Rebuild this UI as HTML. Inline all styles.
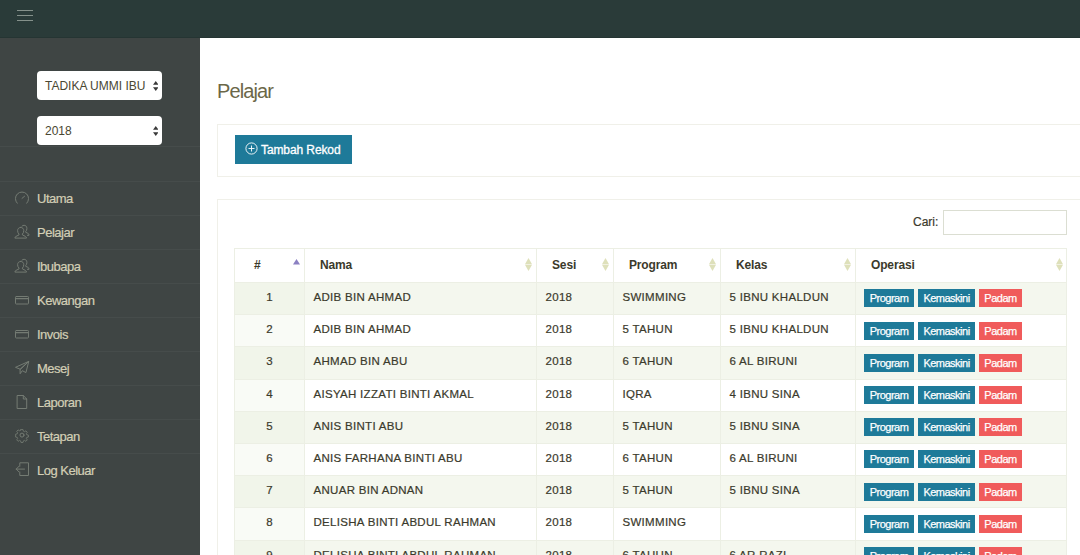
<!DOCTYPE html><html><head><meta charset="utf-8"><title>Pelajar</title><style>
*{box-sizing:border-box;margin:0;padding:0}
html,body{width:1080px;height:555px;overflow:hidden;background:#fff;font-family:"Liberation Sans",sans-serif;font-size:12px;color:#3b3a2c}
.abs{position:absolute}
#hdr{left:0;top:0;width:1080px;height:38px;background:#2a3b39;box-shadow:inset 0 -1px 0 rgba(0,0,0,.1)}
#hdr i{position:absolute;left:17px;width:16px;height:1px;background:#85918b}
#side{left:0;top:38px;width:200px;height:517px;background:#3f4544}
.sel{position:absolute;left:37px;width:125px;height:29px;background:#fff;border-radius:4px;color:#4a4732;font-size:12px;line-height:31px;padding-left:8px}
.sel svg{position:absolute;right:4px;top:10px;width:5.5px;height:10px}
.sep{position:absolute;left:0;width:200px;height:1px;background:#464c4b}
.mi{position:absolute;left:0;width:200px;height:34px;color:#d3cfb6;font-size:13px;line-height:36px;padding-left:37px;letter-spacing:-0.5px;white-space:nowrap;-webkit-text-stroke:.2px #d3cfb6}
.mi svg{position:absolute;left:14px;top:9px;width:16px;height:16px;fill:none;stroke:#747b73;stroke-width:1;stroke-linejoin:round;stroke-linecap:round}
h1{position:absolute;left:217px;top:78px;font-size:20px;font-weight:400;color:#6b6748;letter-spacing:-0.9px;line-height:26px}
.panel{position:absolute;left:217px;width:900px;border:1px solid #f0f0e9;background:#fff}
#add{position:absolute;left:235px;top:135px;width:117px;height:29px;background:#1e7a99;color:#fff;font-size:12px;line-height:30px;letter-spacing:-.1px;white-space:nowrap;-webkit-text-stroke:0.3px #fff}
#add span{position:absolute;left:26px;top:0}
#add svg{position:absolute;left:10px;top:7px;width:13px;height:13px;fill:none;stroke:#fff;stroke-width:.9}
#cari{position:absolute;left:913px;top:210px;line-height:25px;font-size:12px;color:#3b3a2c;-webkit-text-stroke:.2px #3b3a2c}
#inp{position:absolute;left:943px;top:210px;width:124px;height:25px;border:1px solid #dbded2;background:#fff}
#tbl{position:absolute;left:234px;top:248px;width:833px;height:320px}
.cell{position:absolute;border-left:1px solid #ecefe4;border-top:1px solid #ecefe4;white-space:nowrap;overflow:hidden}
.th{font-weight:700;font-size:12px;line-height:33px;padding-left:15px;letter-spacing:-0.15px;color:#3b3a2c;background:#fff}
.td{line-height:29px;padding-left:8.5px;font-size:11.5px;letter-spacing:.3px;-webkit-text-stroke:.2px #3b3a2c}
.td.c0{text-align:center;padding-left:0}
.odd{background:#f4f7ee}
.odd.c0{background:#f1f5ea}
.even{background:#fff}
.even.c0{background:#f9fbf6}
.sort{position:absolute;right:4.5px;top:9px;width:7px;height:13px}
.btn{position:absolute;top:6px;height:18px;color:#fff;font-size:11px;line-height:18px;text-align:center;letter-spacing:-0.5px;-webkit-text-stroke:0.25px #fff}
.b1{left:8px;width:50px;background:#1e7a99}
.b2{left:62px;width:57px;background:#1e7a99}
.b3{left:123px;width:43px;background:#f05b5b}
</style></head><body>
<div id="hdr" class="abs"><i style="top:10px"></i><i style="top:15px"></i><i style="top:20px"></i></div>
<div id="side" class="abs">
<div class="sel" style="top:33px">TADIKA UMMI IBU<svg viewBox="0 0 6 11"><path d="M3 0L6 4H0zM3 11L0 7h6z" fill="#3a3a3a"/></svg></div>
<div class="sel" style="top:78px">2018<svg viewBox="0 0 6 11"><path d="M3 0L6 4H0zM3 11L0 7h6z" fill="#3a3a3a"/></svg></div>
<div class="sep" style="top:108px"></div>
<div class="sep" style="top:143px"></div>
<div class="mi" style="top:143px"><svg viewBox="0 0 16 16"><path d="M3.2 13.2A6.6 6.6 0 1 1 12.8 13.2" /><path d="M8 8.4L10.6 6.2"/></svg>Utama</div>
<div class="sep" style="top:177px"></div>
<div class="mi" style="top:177px"><svg viewBox="0 0 16 16"><path d="M6.200 3.400c1.900 0 3.100 1.400 3.100 3.300 0 1.500-.6 2.600-1.400 3.300v.9l3 1.500c.7.300 1.100.9 1.100 1.700H.4c0-.8.4-1.400 1.100-1.700l3-1.500v-.9c-.8-.7-1.400-1.800-1.400-3.300 0-1.900 1.200-3.300 3.100-3.300z" transform="translate(.5 0)"/><path d="M8 2.100c.6-.5 1.300-.8 2.100-.8 1.800 0 2.800 1.400 2.800 3.200 0 1.400-.5 2.400-1.200 3v.8l2.200 1c.7.300 1.100.9 1.100 1.600v.4h-1.600"/></svg>Pelajar</div>
<div class="sep" style="top:211px"></div>
<div class="mi" style="top:211px"><svg viewBox="0 0 16 16"><path d="M6.200 3.400c1.900 0 3.100 1.400 3.100 3.300 0 1.500-.6 2.600-1.400 3.300v.9l3 1.500c.7.300 1.100.9 1.100 1.700H.4c0-.8.4-1.400 1.100-1.700l3-1.500v-.9c-.8-.7-1.400-1.800-1.400-3.300 0-1.900 1.200-3.300 3.100-3.300z" transform="translate(.5 0)"/><path d="M8 2.100c.6-.5 1.300-.8 2.100-.8 1.800 0 2.800 1.400 2.800 3.200 0 1.400-.5 2.400-1.200 3v.8l2.200 1c.7.300 1.100.9 1.100 1.600v.4h-1.600"/></svg>Ibubapa</div>
<div class="sep" style="top:245px"></div>
<div class="mi" style="top:245px"><svg viewBox="0 0 16 16"><rect x="1.500" y="4.500" width="13" height="7.500" rx=".8"/><path d="M1.500 6.600h13" stroke-width="1.200"/></svg>Kewangan</div>
<div class="sep" style="top:279px"></div>
<div class="mi" style="top:279px"><svg viewBox="0 0 16 16"><rect x="1.500" y="4.500" width="13" height="7.500" rx=".8"/><path d="M1.500 6.600h13" stroke-width="1.200"/></svg>Invois</div>
<div class="sep" style="top:313px"></div>
<div class="mi" style="top:313px"><svg viewBox="0 0 16 16"><path d="M14.500 1.500L1.500 7.300l4.600 1.900zM14.500 1.500L6.100 9.200v4.600l2.200-3.100 3.300 1.700z"/></svg>Mesej</div>
<div class="sep" style="top:347px"></div>
<div class="mi" style="top:347px"><svg viewBox="0 0 16 16"><path d="M3.500 1.500h5.800L12.700 5v9.500H3.500zM9.300 1.500V5h3.400"/></svg>Laporan</div>
<div class="sep" style="top:381px"></div>
<div class="mi" style="top:381px"><svg viewBox="0 0 16 16"><circle cx="8" cy="7.100" r="2"/><path d="M6.800 1.500h2.400l.4 1.900 1.300.6 1.700-1 1.600 1.700-1.100 1.600.5 1.300 1.900.400v2.300l-1.900.4-.5 1.300 1.100 1.600-1.600 1.700-1.700-1.100-1.300.6-.4 1.900H6.800l-.4-1.900-1.300-.6-1.700 1.100-1.600-1.700 1.100-1.600-.5-1.300-1.900-.4V6.900l1.900-.4.5-1.300-1.100-1.600 1.600-1.700 1.700 1 1.300-.6z" transform="translate(1.2 0.3) scale(0.85)"/></svg>Tetapan</div>
<div class="sep" style="top:415px"></div>
<div class="mi" style="top:415px"><svg viewBox="0 0 16 16"><path d="M5.800 4.200V.8h8.700v12.700H5.800V10"/><path d="M10.500 7.100H2.200M5 4.300L2.200 7.100 5 9.900"/></svg>Log Keluar</div>
</div>
<h1>Pelajar</h1>
<div class="panel" style="top:124px;height:53px"></div>
<div id="add"><svg viewBox="0 0 13 13"><circle cx="6.500" cy="6.500" r="5.600"/><path d="M6.500 3.500v6M3.500 6.500h6"/></svg><span>Tambah Rekod</span></div>
<div class="panel" style="top:199px;height:400px"></div>
<div id="cari">Cari:</div><div id="inp"></div>
<div id="tbl">
<div class="cell th" style="left:0px;top:0;width:70px;height:34px;text-align:left;padding-left:19px;">#<svg class="sort" style="right:4.5px" viewBox="0 0 7 13"><path d="M3.500 1L7 6.500H0z" fill="#8b80c2"/></svg></div>
<div class="cell th" style="left:70px;top:0;width:232px;height:34px;">Nama<svg class="sort" viewBox="0 0 7 13"><path d="M3.500 0L7 6.200H0z" fill="#dee0ba"/><path d="M3.500 13L0 6.800h7z" fill="#dee0ba"/></svg></div>
<div class="cell th" style="left:302px;top:0;width:77px;height:34px;">Sesi<svg class="sort" viewBox="0 0 7 13"><path d="M3.500 0L7 6.200H0z" fill="#dee0ba"/><path d="M3.500 13L0 6.800h7z" fill="#dee0ba"/></svg></div>
<div class="cell th" style="left:379px;top:0;width:107px;height:34px;">Program<svg class="sort" viewBox="0 0 7 13"><path d="M3.500 0L7 6.200H0z" fill="#dee0ba"/><path d="M3.500 13L0 6.800h7z" fill="#dee0ba"/></svg></div>
<div class="cell th" style="left:486px;top:0;width:135px;height:34px;">Kelas<svg class="sort" viewBox="0 0 7 13"><path d="M3.500 0L7 6.200H0z" fill="#dee0ba"/><path d="M3.500 13L0 6.800h7z" fill="#dee0ba"/></svg></div>
<div class="cell th" style="left:621px;top:0;width:212px;height:34px;">Operasi<svg class="sort" viewBox="0 0 7 13"><path d="M3.500 0L7 6.200H0z" fill="#dee0ba"/><path d="M3.500 13L0 6.800h7z" fill="#dee0ba"/></svg></div>
<div class="cell td odd c0" style="left:0px;top:34px;width:70px;height:32px;line-height:29px">1</div>
<div class="cell td odd c1" style="left:70px;top:34px;width:232px;height:32px;line-height:29px">ADIB BIN AHMAD</div>
<div class="cell td odd c2" style="left:302px;top:34px;width:77px;height:32px;line-height:29px">2018</div>
<div class="cell td odd c3" style="left:379px;top:34px;width:107px;height:32px;line-height:29px">SWIMMING</div>
<div class="cell td odd c4" style="left:486px;top:34px;width:135px;height:32px;line-height:29px">5 IBNU KHALDUN</div>
<div class="cell td odd c5" style="left:621px;top:34px;width:212px;height:32px;line-height:29px"><div class="btn b1" style="top:6px">Program</div><div class="btn b2" style="top:6px">Kemaskini</div><div class="btn b3" style="top:6px">Padam</div></div>
<div class="cell td even c0" style="left:0px;top:66px;width:70px;height:32px;line-height:29px">2</div>
<div class="cell td even c1" style="left:70px;top:66px;width:232px;height:32px;line-height:29px">ADIB BIN AHMAD</div>
<div class="cell td even c2" style="left:302px;top:66px;width:77px;height:32px;line-height:29px">2018</div>
<div class="cell td even c3" style="left:379px;top:66px;width:107px;height:32px;line-height:29px">5 TAHUN</div>
<div class="cell td even c4" style="left:486px;top:66px;width:135px;height:32px;line-height:29px">5 IBNU KHALDUN</div>
<div class="cell td even c5" style="left:621px;top:66px;width:212px;height:32px;line-height:29px"><div class="btn b1" style="top:7px">Program</div><div class="btn b2" style="top:7px">Kemaskini</div><div class="btn b3" style="top:7px">Padam</div></div>
<div class="cell td odd c0" style="left:0px;top:98px;width:70px;height:33px;line-height:29px">3</div>
<div class="cell td odd c1" style="left:70px;top:98px;width:232px;height:33px;line-height:29px">AHMAD BIN ABU</div>
<div class="cell td odd c2" style="left:302px;top:98px;width:77px;height:33px;line-height:29px">2018</div>
<div class="cell td odd c3" style="left:379px;top:98px;width:107px;height:33px;line-height:29px">6 TAHUN</div>
<div class="cell td odd c4" style="left:486px;top:98px;width:135px;height:33px;line-height:29px">6 AL BIRUNI</div>
<div class="cell td odd c5" style="left:621px;top:98px;width:212px;height:33px;line-height:29px"><div class="btn b1" style="top:7px">Program</div><div class="btn b2" style="top:7px">Kemaskini</div><div class="btn b3" style="top:7px">Padam</div></div>
<div class="cell td even c0" style="left:0px;top:131px;width:70px;height:32px;line-height:28px">4</div>
<div class="cell td even c1" style="left:70px;top:131px;width:232px;height:32px;line-height:28px">AISYAH IZZATI BINTI AKMAL</div>
<div class="cell td even c2" style="left:302px;top:131px;width:77px;height:32px;line-height:28px">2018</div>
<div class="cell td even c3" style="left:379px;top:131px;width:107px;height:32px;line-height:28px">IQRA</div>
<div class="cell td even c4" style="left:486px;top:131px;width:135px;height:32px;line-height:28px">4 IBNU SINA</div>
<div class="cell td even c5" style="left:621px;top:131px;width:212px;height:32px;line-height:28px"><div class="btn b1" style="top:6px">Program</div><div class="btn b2" style="top:6px">Kemaskini</div><div class="btn b3" style="top:6px">Padam</div></div>
<div class="cell td odd c0" style="left:0px;top:163px;width:70px;height:32px;line-height:28px">5</div>
<div class="cell td odd c1" style="left:70px;top:163px;width:232px;height:32px;line-height:28px">ANIS BINTI ABU</div>
<div class="cell td odd c2" style="left:302px;top:163px;width:77px;height:32px;line-height:28px">2018</div>
<div class="cell td odd c3" style="left:379px;top:163px;width:107px;height:32px;line-height:28px">5 TAHUN</div>
<div class="cell td odd c4" style="left:486px;top:163px;width:135px;height:32px;line-height:28px">5 IBNU SINA</div>
<div class="cell td odd c5" style="left:621px;top:163px;width:212px;height:32px;line-height:28px"><div class="btn b1" style="top:6px">Program</div><div class="btn b2" style="top:6px">Kemaskini</div><div class="btn b3" style="top:6px">Padam</div></div>
<div class="cell td even c0" style="left:0px;top:195px;width:70px;height:32px;line-height:29px">6</div>
<div class="cell td even c1" style="left:70px;top:195px;width:232px;height:32px;line-height:29px">ANIS FARHANA BINTI ABU</div>
<div class="cell td even c2" style="left:302px;top:195px;width:77px;height:32px;line-height:29px">2018</div>
<div class="cell td even c3" style="left:379px;top:195px;width:107px;height:32px;line-height:29px">6 TAHUN</div>
<div class="cell td even c4" style="left:486px;top:195px;width:135px;height:32px;line-height:29px">6 AL BIRUNI</div>
<div class="cell td even c5" style="left:621px;top:195px;width:212px;height:32px;line-height:29px"><div class="btn b1" style="top:6px">Program</div><div class="btn b2" style="top:6px">Kemaskini</div><div class="btn b3" style="top:6px">Padam</div></div>
<div class="cell td odd c0" style="left:0px;top:227px;width:70px;height:32px;line-height:29px">7</div>
<div class="cell td odd c1" style="left:70px;top:227px;width:232px;height:32px;line-height:29px">ANUAR BIN ADNAN</div>
<div class="cell td odd c2" style="left:302px;top:227px;width:77px;height:32px;line-height:29px">2018</div>
<div class="cell td odd c3" style="left:379px;top:227px;width:107px;height:32px;line-height:29px">5 TAHUN</div>
<div class="cell td odd c4" style="left:486px;top:227px;width:135px;height:32px;line-height:29px">5 IBNU SINA</div>
<div class="cell td odd c5" style="left:621px;top:227px;width:212px;height:32px;line-height:29px"><div class="btn b1" style="top:7px">Program</div><div class="btn b2" style="top:7px">Kemaskini</div><div class="btn b3" style="top:7px">Padam</div></div>
<div class="cell td even c0" style="left:0px;top:259px;width:70px;height:33px;line-height:29px">8</div>
<div class="cell td even c1" style="left:70px;top:259px;width:232px;height:33px;line-height:29px">DELISHA BINTI ABDUL RAHMAN</div>
<div class="cell td even c2" style="left:302px;top:259px;width:77px;height:33px;line-height:29px">2018</div>
<div class="cell td even c3" style="left:379px;top:259px;width:107px;height:33px;line-height:29px">SWIMMING</div>
<div class="cell td even c4" style="left:486px;top:259px;width:135px;height:33px;line-height:29px"></div>
<div class="cell td even c5" style="left:621px;top:259px;width:212px;height:33px;line-height:29px"><div class="btn b1" style="top:7px">Program</div><div class="btn b2" style="top:7px">Kemaskini</div><div class="btn b3" style="top:7px">Padam</div></div>
<div class="cell td odd c0" style="left:0px;top:292px;width:70px;height:32px;line-height:28px">9</div>
<div class="cell td odd c1" style="left:70px;top:292px;width:232px;height:32px;line-height:28px">DELISHA BINTI ABDUL RAHMAN</div>
<div class="cell td odd c2" style="left:302px;top:292px;width:77px;height:32px;line-height:28px">2018</div>
<div class="cell td odd c3" style="left:379px;top:292px;width:107px;height:32px;line-height:28px">6 TAHUN</div>
<div class="cell td odd c4" style="left:486px;top:292px;width:135px;height:32px;line-height:28px">6 AR RAZI</div>
<div class="cell td odd c5" style="left:621px;top:292px;width:212px;height:32px;line-height:28px"><div class="btn b1" style="top:6px">Program</div><div class="btn b2" style="top:6px">Kemaskini</div><div class="btn b3" style="top:6px">Padam</div></div>
<div class="abs" style="left:832px;top:0;width:1px;height:320px;background:#ecefe4"></div>
</div>
</body></html>
